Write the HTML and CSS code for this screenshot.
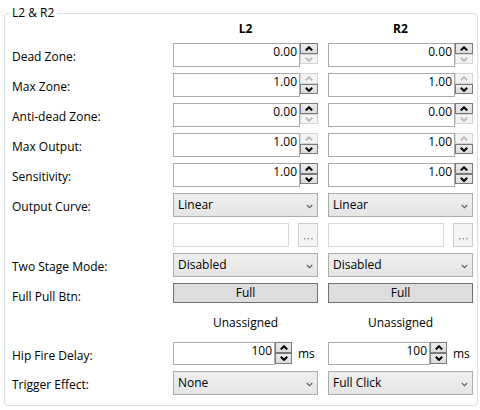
FILE: index.html
```html
<!DOCTYPE html>
<html>
<head>
<meta charset="utf-8">
<link rel="stylesheet" href="styles.css">
</head>
<body>
<fieldset class="group">
  <legend class="legend">L2 &amp; R2</legend>
  <div class="grid">
    <div></div><div class="head">L2</div><div class="head">R2</div>

    <div class="label">Dead Zone:</div>
    <div class="num"><div class="tb">0.00</div><div class="spin"><div class="sb up on"><svg width="8" height="5" viewBox="0 0 8 5"><polyline points="0.8,4.4 4,1.2 7.2,4.4"/></svg></div><div class="sb dn off"><svg width="8" height="5" viewBox="0 0 8 5"><polyline points="0.8,0.8 4,4 7.2,0.8"/></svg></div></div></div>
    <div class="num"><div class="tb">0.00</div><div class="spin"><div class="sb up on"><svg width="8" height="5" viewBox="0 0 8 5"><polyline points="0.8,4.4 4,1.2 7.2,4.4"/></svg></div><div class="sb dn off"><svg width="8" height="5" viewBox="0 0 8 5"><polyline points="0.8,0.8 4,4 7.2,0.8"/></svg></div></div></div>

    <div class="label">Max Zone:</div>
    <div class="num"><div class="tb">1.00</div><div class="spin"><div class="sb up off"><svg width="8" height="5" viewBox="0 0 8 5"><polyline points="0.8,4.4 4,1.2 7.2,4.4"/></svg></div><div class="sb dn on"><svg width="8" height="5" viewBox="0 0 8 5"><polyline points="0.8,0.8 4,4 7.2,0.8"/></svg></div></div></div>
    <div class="num"><div class="tb">1.00</div><div class="spin"><div class="sb up off"><svg width="8" height="5" viewBox="0 0 8 5"><polyline points="0.8,4.4 4,1.2 7.2,4.4"/></svg></div><div class="sb dn on"><svg width="8" height="5" viewBox="0 0 8 5"><polyline points="0.8,0.8 4,4 7.2,0.8"/></svg></div></div></div>

    <div class="label">Anti-dead Zone:</div>
    <div class="num"><div class="tb">0.00</div><div class="spin"><div class="sb up on"><svg width="8" height="5" viewBox="0 0 8 5"><polyline points="0.8,4.4 4,1.2 7.2,4.4"/></svg></div><div class="sb dn off"><svg width="8" height="5" viewBox="0 0 8 5"><polyline points="0.8,0.8 4,4 7.2,0.8"/></svg></div></div></div>
    <div class="num"><div class="tb">0.00</div><div class="spin"><div class="sb up on"><svg width="8" height="5" viewBox="0 0 8 5"><polyline points="0.8,4.4 4,1.2 7.2,4.4"/></svg></div><div class="sb dn off"><svg width="8" height="5" viewBox="0 0 8 5"><polyline points="0.8,0.8 4,4 7.2,0.8"/></svg></div></div></div>

    <div class="label">Max Output:</div>
    <div class="num"><div class="tb">1.00</div><div class="spin"><div class="sb up off"><svg width="8" height="5" viewBox="0 0 8 5"><polyline points="0.8,4.4 4,1.2 7.2,4.4"/></svg></div><div class="sb dn on"><svg width="8" height="5" viewBox="0 0 8 5"><polyline points="0.8,0.8 4,4 7.2,0.8"/></svg></div></div></div>
    <div class="num"><div class="tb">1.00</div><div class="spin"><div class="sb up off"><svg width="8" height="5" viewBox="0 0 8 5"><polyline points="0.8,4.4 4,1.2 7.2,4.4"/></svg></div><div class="sb dn on"><svg width="8" height="5" viewBox="0 0 8 5"><polyline points="0.8,0.8 4,4 7.2,0.8"/></svg></div></div></div>

    <div class="label">Sensitivity:</div>
    <div class="num"><div class="tb">1.00</div><div class="spin"><div class="sb up on"><svg width="8" height="5" viewBox="0 0 8 5"><polyline points="0.8,4.4 4,1.2 7.2,4.4"/></svg></div><div class="sb dn on"><svg width="8" height="5" viewBox="0 0 8 5"><polyline points="0.8,0.8 4,4 7.2,0.8"/></svg></div></div></div>
    <div class="num"><div class="tb">1.00</div><div class="spin"><div class="sb up on"><svg width="8" height="5" viewBox="0 0 8 5"><polyline points="0.8,4.4 4,1.2 7.2,4.4"/></svg></div><div class="sb dn on"><svg width="8" height="5" viewBox="0 0 8 5"><polyline points="0.8,0.8 4,4 7.2,0.8"/></svg></div></div></div>

    <div class="label">Output Curve:</div>
    <div class="combo"><span>Linear</span><svg class="chev" width="7" height="5" viewBox="0 0 7 5"><polyline points="0.8,1 3.5,3.7 6.2,1"/></svg></div>
    <div class="combo"><span>Linear</span><svg class="chev" width="7" height="5" viewBox="0 0 7 5"><polyline points="0.8,1 3.5,3.7 6.2,1"/></svg></div>

    <div></div>
    <div class="pick"><div class="ctb"></div><div class="dots"><svg width="9" height="2" viewBox="0 0 9 2"><rect x="0" y="0" width="1.4" height="1.4"/><rect x="3.6" y="0" width="1.4" height="1.4"/><rect x="7.2" y="0" width="1.4" height="1.4"/></svg></div></div>
    <div class="pick"><div class="ctb"></div><div class="dots"><svg width="9" height="2" viewBox="0 0 9 2"><rect x="0" y="0" width="1.4" height="1.4"/><rect x="3.6" y="0" width="1.4" height="1.4"/><rect x="7.2" y="0" width="1.4" height="1.4"/></svg></div></div>

    <div class="label">Two Stage Mode:</div>
    <div class="combo"><span>Disabled</span><svg class="chev" width="7" height="5" viewBox="0 0 7 5"><polyline points="0.8,1 3.5,3.7 6.2,1"/></svg></div>
    <div class="combo"><span>Disabled</span><svg class="chev" width="7" height="5" viewBox="0 0 7 5"><polyline points="0.8,1 3.5,3.7 6.2,1"/></svg></div>

    <div class="label">Full Pull Btn:</div>
    <div class="btn">Full</div>
    <div class="btn">Full</div>

    <div></div>
    <div class="unas">Unassigned</div>
    <div class="unas">Unassigned</div>

    <div class="label">Hip Fire Delay:</div>
    <div class="hip"><div class="num small"><div class="tb">100</div><div class="spin"><div class="sb up on"><svg width="8" height="5" viewBox="0 0 8 5"><polyline points="0.8,4.4 4,1.2 7.2,4.4"/></svg></div><div class="sb dn on"><svg width="8" height="5" viewBox="0 0 8 5"><polyline points="0.8,0.8 4,4 7.2,0.8"/></svg></div></div></div><span class="ms">ms</span></div>
    <div class="hip"><div class="num small"><div class="tb">100</div><div class="spin"><div class="sb up on"><svg width="8" height="5" viewBox="0 0 8 5"><polyline points="0.8,4.4 4,1.2 7.2,4.4"/></svg></div><div class="sb dn on"><svg width="8" height="5" viewBox="0 0 8 5"><polyline points="0.8,0.8 4,4 7.2,0.8"/></svg></div></div></div><span class="ms">ms</span></div>

    <div class="label">Trigger Effect:</div>
    <div class="combo"><span>None</span><svg class="chev" width="7" height="5" viewBox="0 0 7 5"><polyline points="0.8,1 3.5,3.7 6.2,1"/></svg></div>
    <div class="combo"><span>Full Click</span><svg class="chev" width="7" height="5" viewBox="0 0 7 5"><polyline points="0.8,1 3.5,3.7 6.2,1"/></svg></div>
  </div>
</fieldset>
</body>
</html>
```
FILE: styles.css
```css
html, body {
  margin: 0;
  padding: 0;
  background: #ffffff;
}
body {
  font-family: "Open Sans", "Noto Sans", sans-serif;
  font-size: 12px;
  line-height: 16px;
  color: #000000;
}
.group {
  box-sizing: border-box;
  width: 474px;
  margin: 5px 0 0 4px;
  padding: 0 4px 10px 7px;
  border: 1px solid #d5dfe5;
  border-radius: 4px;
  min-width: 0;
}
.legend {
  margin-left: -2px;
  padding: 0 3px 0 2px;
  line-height: 16px;
}
.grid {
  display: grid;
  grid-template-columns: 151px 145px 145px;
  column-gap: 10px;
  grid-template-rows: 22px 30px 30px 30px 30px 30px 30px 30px 30px 30px 29px 29px 24px;
  align-items: start;
}
.head {
  font-weight: bold;
  text-align: center;
}
.label {
  padding-top: 6px;
  white-space: nowrap;
}
.num {
  display: flex;
  height: 24px;
}
.tb {
  box-sizing: border-box;
  width: 127px;
  height: 24px;
  border: 1px solid #ababab;
  background: #ffffff;
  text-align: right;
  padding: 0 2px;
}
.spin {
  display: flex;
  flex-direction: column;
  width: 18px;
  height: 21px;
}
.sb {
  box-sizing: border-box;
  height: 11px;
  border: 1px solid;
  display: flex;
  align-items: center;
  justify-content: center;
}
.sb.dn {
  height: 10px;
}
.sb svg polyline {
  fill: none;
  stroke-width: 2;
  stroke-linejoin: miter;
}
.sb.on {
  border-color: #7a7a7a;
  background: linear-gradient(#ececec, #dcdcdc);
}
.sb.on polyline {
  stroke: #000000;
}
.sb.off {
  border-color: #d4d4d4;
  background: #f4f4f4;
}
.sb.off polyline {
  stroke: #bcbcbc;
}
.combo {
  box-sizing: border-box;
  height: 24px;
  border: 1px solid #acacac;
  background: linear-gradient(#efefef, #e5e5e5);
  padding: 3px 4px 0 4px;
  display: flex;
  justify-content: space-between;
}
.chev {
  margin-top: 7px;
  margin-right: 0;
}
.chev polyline {
  fill: none;
  stroke: #606060;
  stroke-width: 1.2;
}
.pick {
  display: flex;
  justify-content: space-between;
}
.ctb {
  box-sizing: border-box;
  width: 116px;
  height: 24px;
  border: 1px solid #d9d9d9;
  background: #ffffff;
}
.dots {
  box-sizing: border-box;
  width: 20px;
  height: 24px;
  border: 1px solid #cccccc;
  background: #f4f4f4;
  display: flex;
  justify-content: center;
  padding-top: 14px;
}
.dots rect {
  fill: #8a8a8a;
}
.btn {
  box-sizing: border-box;
  height: 20px;
  border: 1px solid #707070;
  background: #dddddd;
  text-align: center;
  line-height: 17px;
}
.unas {
  text-align: center;
  line-height: 20px;
}
.hip {
  display: flex;
  align-items: flex-start;
}
.num.small {
  height: 23px;
}
.num.small .tb {
  width: 102px;
  height: 23px;
}
.num.small .spin {
  width: 17px;
  height: 22px;
  margin-left: 0;
}
.num.small .sb {
  height: 11px;
}
.ms {
  margin-left: 6px;
  padding-top: 4px;
}
```
